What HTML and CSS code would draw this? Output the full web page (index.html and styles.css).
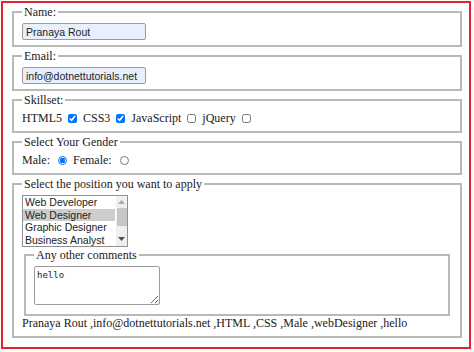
FILE: index.html
```html
<!DOCTYPE html>
<html lang="en">
<head>
    <meta charset="UTF-8">
    <meta name="viewport" content="width=device-width, initial-scale=1.0">
    <title>Job Application</title>
    <link rel="stylesheet" href="styles.css">
</head>
<body>
    <div class="frame">
        <!-- Name -->
        <fieldset class="group">
            <legend>Name:</legend>
            <input type="text" class="field" value="Pranaya Rout">
        </fieldset>

        <!-- Email -->
        <fieldset class="group">
            <legend>Email:</legend>
            <input type="email" class="field" value="info@dotnettutorials.net">
        </fieldset>

        <!-- Skills -->
        <fieldset class="group">
            <legend>Skillset:</legend>
            <div class="row">
                HTML5 <input type="checkbox" class="check" checked>
                CSS3 <input type="checkbox" class="check" checked>
                JavaScript <input type="checkbox" class="check">
                jQuery <input type="checkbox" class="check">
            </div>
        </fieldset>

        <!-- Gender -->
        <fieldset class="group">
            <legend>Select Your Gender</legend>
            <div class="row">
                Male: <input type="radio" name="gender" class="radio" checked>
                Female: <input type="radio" name="gender" class="radio">
            </div>
        </fieldset>

        <!-- Position and comments -->
        <fieldset class="group">
            <legend>Select the position you want to apply</legend>
            <div class="listbox">
                <select class="positions" size="4">
                    <option>Web Developer</option>
                    <option selected>Web Designer</option>
                    <option>Graphic Designer</option>
                    <option>Business Analyst</option>
                    <option>Tester</option>
                    <option>Project Manager</option>
                </select>
                <div class="scrollbar">
                    <svg class="arrow" width="7" height="4" viewBox="0 0 7 4"><path d="M0 4L3.5 0L7 4Z" fill="#a8a8a8"/></svg>
                    <div class="thumb"></div>
                    <svg class="arrow down" width="7" height="4" viewBox="0 0 7 4"><path d="M0 0L3.5 4L7 0Z" fill="#505050"/></svg>
                </div>
            </div>
            <fieldset class="group inner">
                <legend>Any other comments</legend>
                <textarea class="comments">hello</textarea>
            </fieldset>
            <div class="result">Pranaya Rout ,info@dotnettutorials.net ,HTML ,CSS ,Male ,webDesigner ,hello</div>
        </fieldset>
    </div>
</body>
</html>
```

FILE: styles.css
```css
body {
    margin: 0;
    font-family: "Liberation Serif", "Times New Roman", serif;
    font-size: 12px;
    color: #1a1a1a;
    background-color: #fff;
}
.frame {
    box-sizing: border-box;
    width: 470px;
    height: 348px;
    margin: 1px;
    padding: 2px 7px 9px 9px;
    border: 2px solid #e0252d;
}
.group {
    min-width: 0;
    margin: 0 0 2px;
    padding: 4px 8px 5px;
    border: 2px solid #b9b9b9;
}
.group legend {
    padding: 0 2px;
    line-height: 14px;
}
.inner {
    margin: 1px 2px 0;
    padding-bottom: 9px;
}
.field {
    display: block;
    box-sizing: border-box;
    width: 124px;
    height: 17px;
    margin: 0;
    padding: 0 3px;
    font-family: "Liberation Sans", Arial, sans-serif;
    font-size: 10.5px;
    color: #222;
    background-color: #e8f0fe;
    border: 1px solid #9c9c9c;
    border-radius: 2px;
}
.row {
    height: 15px;
    line-height: 15px;
    white-space: nowrap;
}
.check {
    width: 9px;
    height: 9px;
    margin: 0 3px;
    vertical-align: -1px;
}
.radio {
    width: 9px;
    height: 9px;
    margin: 0 3px 0 5px;
    vertical-align: -1px;
}
.listbox {
    display: flex;
    box-sizing: border-box;
    width: 106px;
    height: 52px;
    border: 1px solid #8f8f8f;
    background-color: #fff;
}
.positions {
    flex: 1;
    min-width: 0;
    height: 50px;
    margin: 0;
    padding: 0;
    font-family: "Liberation Sans", Arial, sans-serif;
    font-size: 10.5px;
    color: #222;
    border: none;
    outline: none;
    overflow: hidden;
}
.positions option {
    padding: 0 2px;
}
.positions option:checked {
    background: linear-gradient(#cdcdcd, #cdcdcd);
    color: #222;
}
.scrollbar {
    display: flex;
    flex-direction: column;
    align-items: center;
    width: 11px;
    margin-left: 1px;
    background-color: #f0f0f0;
}
.arrow {
    display: block;
    margin-top: 4px;
}
.arrow.down {
    margin-top: auto;
    margin-bottom: 5px;
}
.thumb {
    width: 10px;
    height: 18px;
    margin-top: 4px;
    background-color: #c6c6c6;
}
.comments {
    display: block;
    box-sizing: border-box;
    width: 126px;
    height: 39px;
    margin: 0;
    padding: 3px 2px;
    font-family: "DejaVu Sans Mono", "Liberation Mono", monospace;
    font-size: 9px;
    color: #222;
    border: 1px solid #9c9c9c;
    border-radius: 2px;
}
.result {
    line-height: 15px;
    white-space: nowrap;
}
```
